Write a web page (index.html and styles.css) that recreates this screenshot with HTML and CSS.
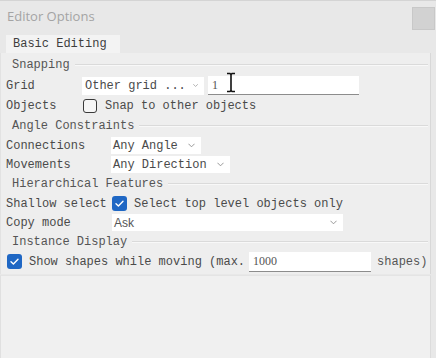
FILE: index.html
```html
<!DOCTYPE html>
<html lang="en">
<head>
    <meta charset="UTF-8" />
    <title>Editor Options</title>
    <link rel="stylesheet" href="styles.css">
</head>
<body>
    <div class="window">
        <div class="titlebar">
            <span class="title">Editor Options</span>
            <span class="close"></span>
        </div>

        <div class="tabs">
            <span class="tab">Basic Editing</span>
        </div>

        <div class="page">
            <!-- Snapping -->
            <section class="group">
                <div class="group-title"><span>Snapping</span></div>
                <div class="form form-snap">
                    <label>Grid</label>
                    <div class="field row-grid">
                        <span class="select select-grid">Other grid ...
                            <svg class="chevron" viewBox="0 0 8 5"><path d="M0.5 0.5l3.5 3.5 3.5-3.5" /></svg>
                        </span>
                        <span class="input input-grid">1</span>
                    </div>
                    <label>Objects</label>
                    <div class="field"><span class="check"></span>Snap to other objects</div>
                </div>
            </section>

            <!-- Angle Constraints -->
            <section class="group group-angle">
                <div class="group-title"><span>Angle Constraints</span></div>
                <div class="form form-angle">
                    <label>Connections</label>
                    <div class="field">
                        <span class="select">Any Angle
                            <svg class="chevron" viewBox="0 0 8 5"><path d="M0.5 0.5l3.5 3.5 3.5-3.5" /></svg>
                        </span>
                    </div>
                    <label>Movements</label>
                    <div class="field">
                        <span class="select">Any Direction
                            <svg class="chevron" viewBox="0 0 8 5"><path d="M0.5 0.5l3.5 3.5 3.5-3.5" /></svg>
                        </span>
                    </div>
                </div>
            </section>

            <!-- Hierarchical Features -->
            <section class="group">
                <div class="group-title"><span>Hierarchical Features</span></div>
                <div class="form form-hier">
                    <label>Shallow select</label>
                    <div class="field"><span class="check checked">
                        <svg viewBox="0 0 15 15"><path d="M4 7.8l2.4 2.3 4.6-4.8" /></svg>
                    </span>Select top level objects only</div>
                    <label>Copy mode</label>
                    <div class="field">
                        <span class="select select-ask">Ask
                            <svg class="chevron" viewBox="0 0 8 5"><path d="M0.5 0.5l3.5 3.5 3.5-3.5" /></svg>
                        </span>
                    </div>
                </div>
            </section>

            <!-- Instance Display -->
            <section class="group">
                <div class="group-title"><span>Instance Display</span></div>
                <div class="field instance">
                    <span class="check checked">
                        <svg viewBox="0 0 15 15"><path d="M4 7.8l2.4 2.3 4.6-4.8" /></svg>
                    </span>Show shapes while moving (max.
                    <span class="input input-max">1000</span>
                    <span class="suffix">shapes)</span>
                </div>
            </section>
        </div>

        <div class="bottom"></div>

        <!-- mouse cursor over the grid field -->
        <svg class="cursor" viewBox="0 0 12 21">
            <path d="M2 1.5h3l1 1 1-1h3M6 2.5v16M2 19.5h3l1-1 1 1h3" />
        </svg>
    </div>
</body>
</html>
```

FILE: styles.css
```css
body {
    margin: 0;
    padding: 0;
    background: #e8e8e8;
    font-family: 'Liberation Mono', 'DejaVu Sans Mono', monospace;
    font-size: 12px;
    color: #4a4a4a;
    white-space: nowrap;
}

.window {
    position: relative;
    width: 436px;
    height: 358px;
    display: flex;
    flex-direction: column;
    box-sizing: border-box;
    border-top: 1px solid #d4d4d4;
    overflow: hidden;
}

/* Title bar */
.titlebar {
    height: 34px;
    display: flex;
    align-items: flex-start;
    justify-content: space-between;
}

.title {
    margin: 6px 0 0 7px;
    font-family: 'Open Sans', 'Noto Sans', sans-serif;
    font-size: 13px;
    color: #a4a4a4;
}

.close {
    width: 23px;
    height: 23px;
    margin: 6px 1px 0 0;
    background: #d2d2d2;
    border: 1px solid #c8c8c8;
    box-sizing: border-box;
}

/* Tab */
.tabs {
    height: 18px;
    padding-left: 6px;
    display: flex;
}

.tab {
    padding: 0 13px 0 7px;
    line-height: 19px;
    background: #f3f3f3;
    color: #3e3e3e;
}

/* Page */
.page {
    width: 431px;
    box-sizing: border-box;
    padding: 2px 0 3px;
    background: #eeeeee;
    border-left: 1px solid #e2e2e2;
    border-right: 1px solid #d8d8d8;
}

.group-angle {
    margin-top: 1px;
}

.group-title {
    height: 20px;
    display: flex;
    align-items: center;
    padding-left: 11px;
    color: #555;
}

.group-title::after {
    content: "";
    flex: 1;
    margin: 0 2px 0 5px;
    border-top: 1px solid #dadada;
    border-bottom: 1px solid #f8f8f8;
}

.form {
    display: grid;
    padding-left: 5px;
    grid-auto-rows: 19px;
    align-items: center;
}

.form-snap {
    grid-template-columns: 76px 1fr;
    grid-template-rows: 21px 19px;
}

.form-angle {
    grid-template-columns: 105px 1fr;
}

.form-hier {
    grid-template-columns: 106px 1fr;
}

.field {
    display: flex;
    align-items: center;
    height: 19px;
}

.row-grid {
    height: 21px;
}

/* Combo boxes */
.select {
    height: 17px;
    display: flex;
    align-items: center;
    gap: 10px;
    padding: 0 6px 0 2px;
    background: #ffffff;
}

.select-grid {
    width: 122px;
    height: 18px;
    box-sizing: border-box;
    padding-left: 3px;
    gap: 7px;
}

.select-ask {
    width: 231px;
    box-sizing: border-box;
    justify-content: space-between;
    font-family: 'Liberation Sans', Arial, sans-serif;
    font-size: 12px;
    color: #555;
}

.chevron {
    width: 7px;
    height: 5px;
    fill: none;
    stroke: #8a8a8a;
    stroke-width: 1;
}

/* Line edits */
.input {
    height: 19px;
    box-sizing: border-box;
    padding-left: 4px;
    display: flex;
    align-items: center;
    background: #ffffff;
    border-bottom: 1px solid #8c8c8c;
    font-family: 'Liberation Serif', 'Times New Roman', serif;
    font-size: 12px;
    color: #555;
}

.input-grid {
    width: 151px;
    margin-left: 4px;
}

.input-max {
    width: 122px;
    height: 20px;
    margin-left: 4px;
}

.suffix {
    margin-left: 6px;
    color: #555;
}

/* Check boxes */
.check {
    width: 14px;
    height: 14px;
    box-sizing: border-box;
    margin: 0 8px 0 1px;
    border: 1px solid #3a3a3a;
    border-radius: 3px;
    background: #f6f6f6;
}

.check.checked {
    width: 15px;
    height: 15px;
    margin: 0 7px 0 0;
    border: none;
    background: #1f67c4;
}

.check svg {
    display: block;
    width: 15px;
    height: 15px;
    fill: none;
    stroke: #ffffff;
    stroke-width: 1.4;
    stroke-linecap: round;
    stroke-linejoin: round;
}

.instance {
    padding-left: 6px;
}

/* Lower empty area */
.bottom {
    flex: 1;
    width: 431px;
    box-sizing: border-box;
    margin-top: 1px;
    background: #f0f0f0;
    border-top: 1px solid #e4e4e4;
    border-left: 1px solid #e0e0e0;
    border-right: 1px solid #dcdcdc;
}

/* Mouse pointer */
.cursor {
    position: absolute;
    left: 225px;
    top: 71px;
    width: 12px;
    height: 21px;
    fill: none;
    stroke: #111;
    stroke-width: 1.6;
}
```
